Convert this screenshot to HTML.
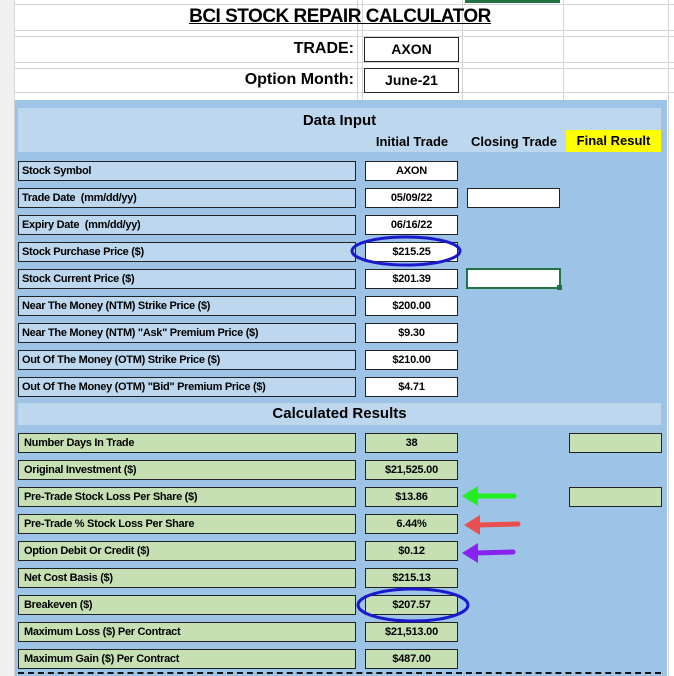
<!DOCTYPE html><html><head><style>
body{margin:0;width:674px;height:676px;position:relative;background:#fff;overflow:hidden;font-family:"Liberation Sans",sans-serif;font-weight:bold;}
.a{position:absolute;box-sizing:border-box;}
.g{position:absolute;background:#d4d4d4;}
.lb{position:absolute;box-sizing:border-box;border:1px solid #222;background:#bdd7ee;left:18px;width:338px;height:20px;font-size:11px;line-height:18px;padding-left:3px;letter-spacing:-0.3px;}
.v{position:absolute;box-sizing:border-box;border:1px solid #222;background:#fff;left:365px;width:93px;height:20px;font-size:11px;line-height:18px;text-align:center;letter-spacing:-0.2px;}
.gr{background:#c6e0b4;}
.lb.gr{padding-left:5px;}
</style></head><body>
<div class="g" style="left:14px;top:0;width:1px;height:676px"></div>
<div class="g" style="left:0;top:4px;width:674px;height:1px"></div>
<div class="g" style="left:0;top:30px;width:674px;height:1px"></div>
<div class="g" style="left:0;top:36px;width:674px;height:1px"></div>
<div class="g" style="left:0;top:62px;width:674px;height:1px"></div>
<div class="g" style="left:0;top:68px;width:674px;height:1px"></div>
<div class="g" style="left:0;top:92px;width:674px;height:1px"></div>
<div class="g" style="left:357px;top:0;width:1px;height:100px"></div>
<div class="g" style="left:362px;top:0;width:1px;height:100px"></div>
<div class="g" style="left:462px;top:0;width:1px;height:100px"></div>
<div class="g" style="left:563px;top:0;width:1px;height:100px"></div>
<div class="g" style="left:668px;top:0;width:1px;height:676px"></div>
<div class="a" style="left:465px;top:0;width:95px;height:3px;background:#217346"></div>
<div class="a" style="left:0;top:0;width:14px;height:676px;background:#f0f0f0"></div>
<div class="a" style="left:0;top:5px;width:680px;font-size:19px;text-align:center;line-height:24px"><span style="text-decoration:underline;letter-spacing:-0.5px">BCI STOCK REPAIR CALCULATOR</span></div>
<div class="a" style="left:150px;top:37px;width:204px;text-align:right;font-size:16px;line-height:24px">TRADE:</div>
<div class="a" style="left:364px;top:37px;width:95px;height:25px;border:1px solid #222;font-size:14px;text-align:center;line-height:23px">AXON</div>
<div class="a" style="left:150px;top:68px;width:204px;text-align:right;font-size:16px;line-height:24px">Option Month:</div>
<div class="a" style="left:364px;top:68px;width:95px;height:25px;border:1px solid #222;font-size:14px;text-align:center;line-height:23px">June-21</div>
<div class="a" style="left:15px;top:100px;width:652px;height:576px;background:#9dc3e6"></div>
<div class="a" style="left:18px;top:108px;width:643px;height:44px;background:#bdd7ee"></div>
<div class="a" style="left:18px;top:110px;width:643px;text-align:center;font-size:15px;line-height:22px">Data Input</div>
<div class="a" style="left:362px;top:132px;width:100px;text-align:center;font-size:13px;line-height:20px">Initial Trade</div>
<div class="a" style="left:463px;top:132px;width:102px;text-align:center;font-size:13px;line-height:20px">Closing Trade</div>
<div class="a" style="left:566px;top:130px;width:95px;height:22px;background:#ffff00;text-align:center;font-size:13px;line-height:22px">Final Result</div>

<div class="lb" style="top:161px">Stock Symbol</div><div class="v" style="top:161px">AXON</div>
<div class="lb" style="top:188px">Trade Date &nbsp;(mm/dd/yy)</div><div class="v" style="top:188px">05/09/22</div>
<div class="v" style="top:188px;left:467px"></div>
<div class="lb" style="top:215px">Expiry Date &nbsp;(mm/dd/yy)</div><div class="v" style="top:215px">06/16/22</div>
<div class="lb" style="top:242px">Stock Purchase Price ($)</div><div class="v" style="top:242px">$215.25</div>
<div class="lb" style="top:269px">Stock Current Price ($)</div><div class="v" style="top:269px">$201.39</div>
<div class="v" style="top:268px;left:466px;height:21px;width:95px;border:2px solid #217346"></div>
<div class="a" style="left:557px;top:285px;width:5px;height:5px;background:#217346"></div>
<div class="lb" style="top:296px">Near The Money (NTM) Strike Price ($)</div><div class="v" style="top:296px">$200.00</div>
<div class="lb" style="top:323px">Near The Money (NTM) "Ask" Premium Price ($)</div><div class="v" style="top:323px">$9.30</div>
<div class="lb" style="top:350px">Out Of The Money (OTM) Strike Price ($)</div><div class="v" style="top:350px">$210.00</div>
<div class="lb" style="top:377px">Out Of The Money (OTM) "Bid" Premium Price ($)</div><div class="v" style="top:377px">$4.71</div>

<div class="a" style="left:18px;top:403px;width:643px;height:22px;background:#bdd7ee;text-align:center;font-size:15px;line-height:22px">Calculated Results</div>

<div class="lb gr" style="top:433px">Number Days In Trade</div><div class="v gr" style="top:433px">38</div>
<div class="v gr" style="top:433px;left:569px"></div>
<div class="lb gr" style="top:460px">Original Investment ($)</div><div class="v gr" style="top:460px">$21,525.00</div>
<div class="lb gr" style="top:487px">Pre-Trade Stock Loss Per Share ($)</div><div class="v gr" style="top:487px">$13.86</div>
<div class="v gr" style="top:487px;left:569px"></div>
<div class="lb gr" style="top:514px">Pre-Trade % Stock Loss Per Share</div><div class="v gr" style="top:514px">6.44%</div>
<div class="lb gr" style="top:541px">Option Debit Or Credit ($)</div><div class="v gr" style="top:541px">$0.12</div>
<div class="lb gr" style="top:568px">Net Cost Basis ($)</div><div class="v gr" style="top:568px">$215.13</div>
<div class="lb gr" style="top:595px">Breakeven ($)</div><div class="v gr" style="top:595px">$207.57</div>
<div class="lb gr" style="top:622px">Maximum Loss ($) Per Contract</div><div class="v gr" style="top:622px">$21,513.00</div>
<div class="lb gr" style="top:649px">Maximum Gain ($) Per Contract</div><div class="v gr" style="top:649px">$487.00</div>
<div class="a" style="left:18px;top:672px;width:643px;border-top:2px dashed #111"></div>

<svg class="a" style="left:0;top:0" width="674" height="676">
<ellipse cx="406" cy="251" rx="54" ry="14" fill="none" stroke="#1a1acc" stroke-width="3"/>
<ellipse cx="413" cy="605" rx="55" ry="16" fill="none" stroke="#1a1acc" stroke-width="3"/>
<g stroke-linecap="round">
<line x1="474" y1="496" x2="514" y2="496" stroke="#22ee22" stroke-width="5"/>
<polygon points="462,496 478,486 478,506" fill="#22ee22"/>
<line x1="476" y1="525" x2="518" y2="524" stroke="#e85050" stroke-width="5"/>
<polygon points="464,525 480,515 480,535" fill="#e85050"/>
<line x1="474" y1="553" x2="513" y2="552" stroke="#8822ee" stroke-width="5"/>
<polygon points="462,553 478,543 478,563" fill="#8822ee"/>
</g>
</svg>
</body></html>
